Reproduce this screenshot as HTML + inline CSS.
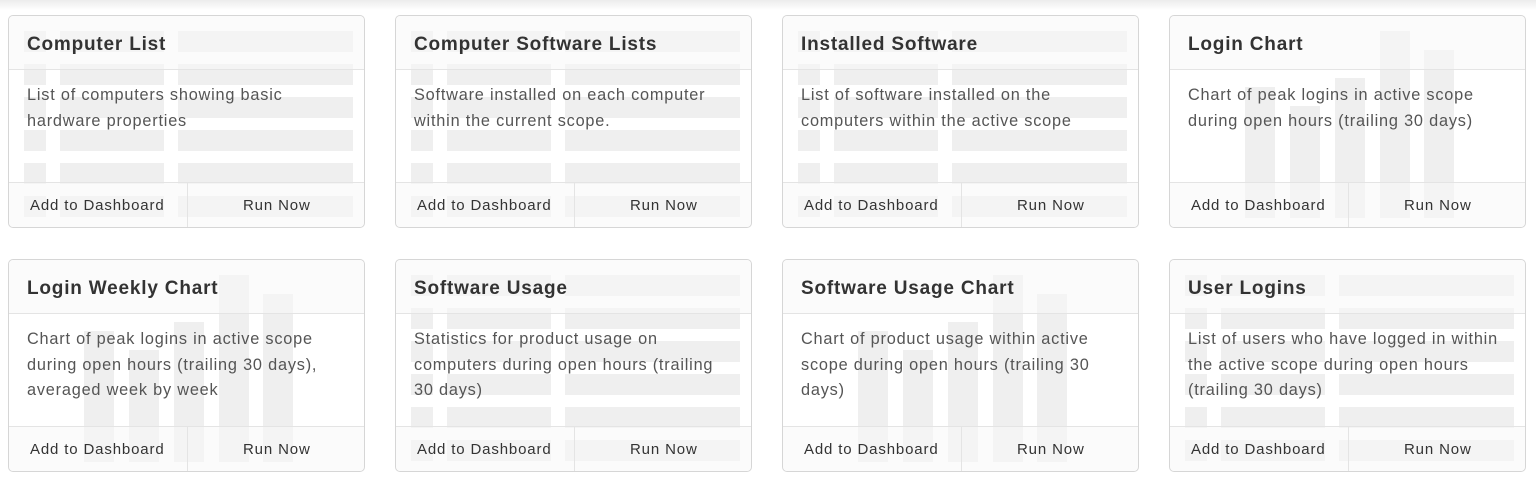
<!DOCTYPE html>
<html><head><style>
body{margin:0;width:1536px;height:485px;background:#fff;position:relative;overflow:hidden;font-family:"Liberation Sans",Arial,sans-serif;}
.top{position:absolute;left:0;top:0;width:1536px;height:10px;background:linear-gradient(#ececec,#fff);}
.card{position:absolute;width:355px;height:211px;border:1px solid #d6d6d6;border-radius:5px;background:#fff;overflow:hidden;}
.bg{position:absolute;background:#efefef;}
.hd{position:absolute;left:0;top:0;width:355px;height:53px;border-bottom:1px solid #e4e4e4;background:rgba(248,248,248,.55);}
.hd span{position:absolute;left:18px;top:18px;font-size:19px;font-weight:bold;color:#333;letter-spacing:0.8px;}
.ds{position:absolute;left:18px;top:67px;width:310px;font-size:16.3px;line-height:25.5px;color:#555;letter-spacing:0.8px;}
.ft{position:absolute;left:0;top:166px;width:355px;height:45px;border-top:1px solid #e4e4e4;background:rgba(248,248,248,.55);font-size:15px;color:#333;letter-spacing:0.85px;}
.ft .a{position:absolute;left:21px;top:14px;}
.ft .r{position:absolute;left:234px;top:14px;}
.ft .d{position:absolute;left:178px;top:0;width:1px;height:45px;background:#e4e4e4;}
</style></head><body>
<div class="top"></div>
<div id="c"></div>
<script>
var cards=[
["Computer List","List of computers showing basic hardware properties","t"],
["Computer Software Lists","Software installed on each computer within the current scope.","t"],
["Installed Software","List of software installed on the computers within the active scope","t"],
["Login Chart","Chart of peak logins in active scope during open hours (trailing 30 days)","c"],
["Login Weekly Chart","Chart of peak logins in active scope during open hours (trailing 30 days), averaged week by week","c"],
["Software Usage","Statistics for product usage on computers during open hours (trailing 30 days)","t"],
["Software Usage Chart","Chart of product usage within active scope during open hours (trailing 30 days)","c"],
["User Logins","List of users who have logged in within the active scope during open hours (trailing 30 days)","t"]];
var xs=[8,395,782,1169],ys=[15,259],h="";
cards.forEach(function(c,i){
var x=xs[i%4],y=ys[Math.floor(i/4)],bg="";
if(c[2]=="t"){var cols=[[15,22],[51,104],[169,175]];
for(var r=0;r<6;r++)cols.forEach(function(k){bg+='<div class="bg" style="left:'+k[0]+'px;top:'+(15+33*r)+'px;width:'+k[1]+'px;height:21px"></div>';});}
else{var b=[[75,71],[120,90],[165,62],[210,15],[254,34]];
b.forEach(function(k){bg+='<div class="bg" style="left:'+k[0]+'px;top:'+k[1]+'px;width:30px;height:'+(202-k[1])+'px"></div>';});}
h+='<div class="card" style="left:'+x+'px;top:'+y+'px">'+bg+'<div class="hd"><span>'+c[0]+'</span></div><div class="ds">'+c[1]+'</div><div class="ft"><div class="d"></div><span class="a">Add to Dashboard</span><span class="r">Run Now</span></div></div>';
});
document.getElementById("c").innerHTML=h;
</script>
</body></html>
